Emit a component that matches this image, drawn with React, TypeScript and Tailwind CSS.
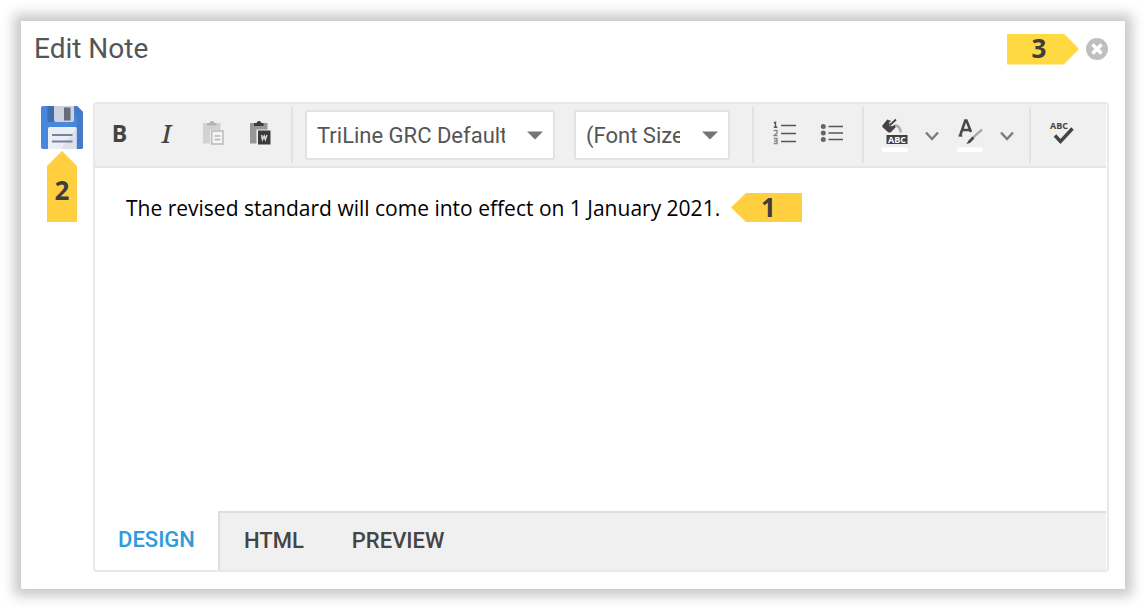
import React from "react";

const sans = "font-['Roboto',sans-serif]";

function Separator() {
  return <div className="h-14 w-0.5 shrink-0 bg-[#e2e2e2]" />;
}

function ToolButton({ label, children }: { label: string; children: React.ReactNode }) {
  return (
    <button type="button" aria-label={label} className="flex h-12 w-[47px] shrink-0 items-center justify-center pb-1">
      {children}
    </button>
  );
}

function ColorButton({ label, children }: { label: string; children: React.ReactNode }) {
  return (
    <button type="button" aria-label={label} className="flex h-12 w-[47px] shrink-0 items-center justify-center">
      {children}
    </button>
  );
}

function ChevronButton({ label }: { label: string }) {
  return (
    <button type="button" aria-label={label} className="flex h-12 w-6 shrink-0 items-center justify-center">
      <svg width="14" height="11" viewBox="0 0 14 11" className="mt-0.5" fill="none" stroke="#7c7c7c" strokeWidth="2.4">
        <path d="M1 1.500 7 8 13 1.500" />
      </svg>
    </button>
  );
}

function ToolSelect({ label, value, className }: { label: string; value: string; className: string }) {
  return (
    <div className={`relative shrink-0 ${className}`}>
      <select
        aria-label={label}
        className="h-[50px] w-full appearance-none rounded-[3px] border-2 border-[#e2e2e2] bg-white pr-12 pl-[10px] text-[22px] text-[#555]"
      >
        <option>{value}</option>
      </select>
      <svg width="16" height="9" viewBox="0 0 16 9" className="pointer-events-none absolute top-[21px] right-3" fill="#757575">
        <path d="M0 0.5H16L8 8.5Z" />
      </svg>
    </div>
  );
}

function SaveIcon() {
  return (
    <svg width="42" height="43" viewBox="0 0 42 43">
      <path d="M2 0H36L42 6V41Q42 43 40 43H2Q0 43 0 41V2Q0 0 2 0Z" fill="#4787dc" />
      <path d="M32 0H36L42 6V41Q42 43 40 43H36V16Z" fill="#437bc9" />
      <rect x="6.5" width="7" height="16" fill="#3b70ad" />
      <path d="M13 0H33V14Q33 16 31 16H15Q13 16 13 14Z" fill="#ced2de" />
      <rect x="23" y="1.5" width="6.5" height="13" fill="#666d79" />
      <path d="M7 22.5Q7 21 8.500 21H34Q35.500 21 35.500 22.500V43H7Z" fill="#eceef6" />
      <path d="M35.500 21V43H20Z" fill="#dfe1ea" />
      <path d="M11 29H31.500M11 35.500H31.500" stroke="#6f849e" strokeWidth="1.8" />
    </svg>
  );
}

function PasteIcon() {
  return (
    <svg width="21" height="24" viewBox="0 0 21 24">
      <path d="M0 2H17.500V9H7V22.500H0Z" fill="#d2d2d2" />
      <path d="M4 4.500V2H6.500Q7 0 9 0Q11 0 11.500 2H13.500V4.500Z" fill="#b3b3b3" />
      <rect x="8.700" y="10" width="11.300" height="13" fill="#f5f5f5" stroke="#bdbdbd" strokeWidth="1.600" />
      <path d="M11.500 15H17.500M11.500 18.500H17.500" stroke="#b5b5b5" strokeWidth="1.500" />
    </svg>
  );
}

function PasteWordIcon() {
  return (
    <svg width="21" height="24" viewBox="0 0 21 24">
      <path d="M0 2H17.500V8.500H6.500V22.500H0Z" fill="#979797" />
      <path d="M4 5V2H6.500Q7 0 9 0Q11 0 11.500 2H13.500V5Z" fill="#3c3c3c" />
      <rect x="8" y="9.500" width="12.500" height="14" fill="#3c3c3c" />
      <path d="M11.500 14 12.500 18.500 14.200 15 15.300 18.500 17 14" fill="none" stroke="#ddd" strokeWidth="1.500" />
    </svg>
  );
}

function NumberedIcon() {
  return (
    <svg width="24" height="24" viewBox="0 0 24 24" fill="none" stroke="#555">
      <path d="M8 4.500H23M8 12.500H23M8 20.500H23" strokeWidth="1.700" />
      <path d="M0.800 2 2.500 1.300V6.200M0.800 6.200H4.300" strokeWidth="1.400" />
      <path d="M0.700 9.500H4V12L1 14.500H4.500" stroke="#888" strokeWidth="1.400" />
      <path d="M0.700 17.500H4V22.500H0.700M1 20H4" stroke="#888" strokeWidth="1.400" />
    </svg>
  );
}

function BulletIcon() {
  return (
    <svg width="24" height="20" viewBox="0 0 24 20">
      <g fill="#666">
        <circle cx="3.300" cy="3.500" r="2.500" />
        <circle cx="3.300" cy="10" r="2.500" />
        <circle cx="3.300" cy="16.500" r="2.500" />
      </g>
      <path d="M8.500 3.500H23M8.500 10H23M8.500 16.500H23" stroke="#555" strokeWidth="1.700" />
    </svg>
  );
}

function FillIcon() {
  return (
    <svg width="26" height="34" viewBox="0 0 26 34">
      <path d="M0.300 7.500 5.500 2.500 7.500 4.500 7 8 10 8.300 13.500 6.500V9.500L8.500 14.500H6.500L0.300 9Z" fill="#444" />
      <path d="M2 7 5.500 2.500 8.500 3.500" fill="none" stroke="#444" strokeWidth="1.600" />
      <path d="M7.500 7.500 14 1.500" stroke="#444" strokeWidth="1.800" />
      <path d="M13.500 6Q20 7.500 20 14.500H17.500Q17 10 14 9Z" fill="#b0b0b0" />
      <rect x="4.500" y="17" width="21" height="9" fill="#404040" />
      <text x="15" y="24.700" textAnchor="middle" fontFamily="Open Sans, sans-serif" fontWeight="700" fontSize="9" fill="#fff">ABC</text>
      <rect y="29.500" width="25.500" height="4.500" fill="#fff" />
    </svg>
  );
}

function FontColorIcon() {
  return (
    <svg width="26" height="34" viewBox="0 0 26 34" fill="none">
      <path d="M3 18 8.300 2.500H9.500L14 14M5.500 12H12.500" stroke="#484848" strokeWidth="2.600" />
      <path d="M1.500 18H5.500" stroke="#484848" strokeWidth="1.200" />
      <path d="M15 20.500 25 11.500" stroke="#aaa" strokeWidth="2.400" />
      <path d="M9.500 26 11.500 22.500 15.500 18.500 17.500 20.500 13 25Z" fill="#484848" />
      <rect y="29.500" width="25.500" height="4.500" fill="#fff" />
    </svg>
  );
}

function SpellIcon() {
  return (
    <svg width="28" height="28" viewBox="-2 -2 28 28">
      <text x="9" y="8" textAnchor="middle" fontFamily="Open Sans, sans-serif" fontWeight="700" fontSize="9" fill="#444">ABC</text>
      <path d="M5 14.500 10.500 20.500 22.500 7.500" fill="none" stroke="#444" strokeWidth="3.400" />
    </svg>
  );
}

const marker = "flex items-center justify-center pb-0.5 font-['Open_Sans',sans-serif] text-[26px] leading-none font-bold text-[#3e3e3e]";

export default function App() {
  return (
    <main className={`flex min-h-screen bg-white p-[21px] ${sans}`}>
      <section aria-labelledby="dialog-title" className="flex min-w-0 flex-1 flex-col bg-white shadow-[0_0_12px_7px_#c8c8c8]">
        <header className="flex h-[81px] shrink-0 items-start justify-between pt-3 pr-[17px] pl-[13px]">
          <h1 id="dialog-title" className="text-[28px] leading-8 text-[#555]">Edit Note</h1>
          <div className="flex h-8 items-center gap-[7px]">
            <div className={`${marker} h-[31px] w-[72px] bg-[#ffd941] pr-2 [clip-path:polygon(0_0,79%_0,100%_50%,79%_100%,0_100%)]`}>3</div>
            <button type="button" aria-label="Close">
              <svg width="22" height="22" viewBox="0 0 22 22">
                <circle cx="11" cy="11" r="11" fill="#bfbfbf" />
                <path d="M6.500 6.500 15.500 15.500M15.500 6.500 6.500 15.500" stroke="#fff" strokeWidth="3.600" />
              </svg>
            </button>
          </div>
        </header>

        <div className="flex flex-1 gap-2.5 pr-4 pb-[17px] pl-5">
          <div className="flex shrink-0 flex-col items-center gap-0.5 pt-1">
            <button type="button" aria-label="Save"><SaveIcon /></button>
            <div className={`${marker} h-[71px] w-[30px] bg-[#ffcf40] pt-2 [clip-path:polygon(50%_0,100%_21%,100%_100%,0_100%,0_21%)]`}>2</div>
          </div>

          <div className="flex min-w-0 flex-1 flex-col rounded-[4px] border-2 border-[#e8e8e8] pr-px">
            <div role="toolbar" aria-label="Formatting" className="flex h-16 shrink-0 items-center border-b-2 border-[#e4e4e4] bg-[#f0f0f0]">
              <div className="ml-px flex">
                <ToolButton label="Bold"><span className="font-['Open_Sans',sans-serif] text-[23px] leading-none font-bold text-[#444]">B</span></ToolButton>
                <ToolButton label="Italic"><span className="font-['Noto_Serif','Liberation_Serif',serif] text-[25px] leading-none font-medium text-[#444] italic">I</span></ToolButton>
                <ToolButton label="Paste"><PasteIcon /></ToolButton>
                <ToolButton label="Paste from Word"><PasteWordIcon /></ToolButton>
              </div>
              <div className="ml-[7px] flex items-center gap-3">
                <Separator />
                <ToolSelect label="Font" value="TriLine GRC Default" className="w-[250px]" />
              </div>
              <ToolSelect label="Font size" value="(Font Size)" className="mr-[22px] ml-[19px] w-[156px]" />
              <Separator />
              <div className="mx-[7px] flex">
                <ToolButton label="Numbered list"><NumberedIcon /></ToolButton>
                <ToolButton label="Bulleted list"><BulletIcon /></ToolButton>
              </div>
              <Separator />
              <div className="mr-2.5 ml-[7px] flex gap-0.5">
                <ColorButton label="Highlight colour"><FillIcon /></ColorButton>
                <ChevronButton label="Highlight colour options" />
                <ColorButton label="Font colour"><FontColorIcon /></ColorButton>
                <ChevronButton label="Font colour options" />
              </div>
              <Separator />
              <div className="ml-[7px]"><ToolButton label="Spell check"><SpellIcon /></ToolButton></div>
            </div>

            <div className="relative flex flex-1">
              <textarea
                aria-label="Note"
                defaultValue="The revised standard will come into effect on 1 January 2021."
                className="w-full resize-none bg-transparent px-[31px] pt-6 font-['Open_Sans',sans-serif] text-[21px] leading-8 text-black outline-none"
              />
              <div className={`${marker} absolute top-[25px] left-[636px] h-[29px] w-[71px] bg-[#ffcf40] pl-1 [clip-path:polygon(21%_0,100%_0,100%_100%,21%_100%,0_50%)]`}>1</div>
            </div>

            <div role="tablist" className="flex h-[59px] shrink-0 text-[22px] font-medium">
              <button type="button" role="tab" aria-selected="true" className="w-[123px] shrink-0 pb-0.5 text-[#2f9bda]">DESIGN</button>
              <div className="flex flex-1 border-t-2 border-l-2 border-[#dedede] bg-[#f0f0f0] pb-0.5 pl-6 text-[#444]">
                <button type="button" role="tab" aria-selected="false" className="mr-12">HTML</button>
                <button type="button" role="tab" aria-selected="false">PREVIEW</button>
              </div>
            </div>
          </div>
        </div>
      </section>
    </main>
  );
}
